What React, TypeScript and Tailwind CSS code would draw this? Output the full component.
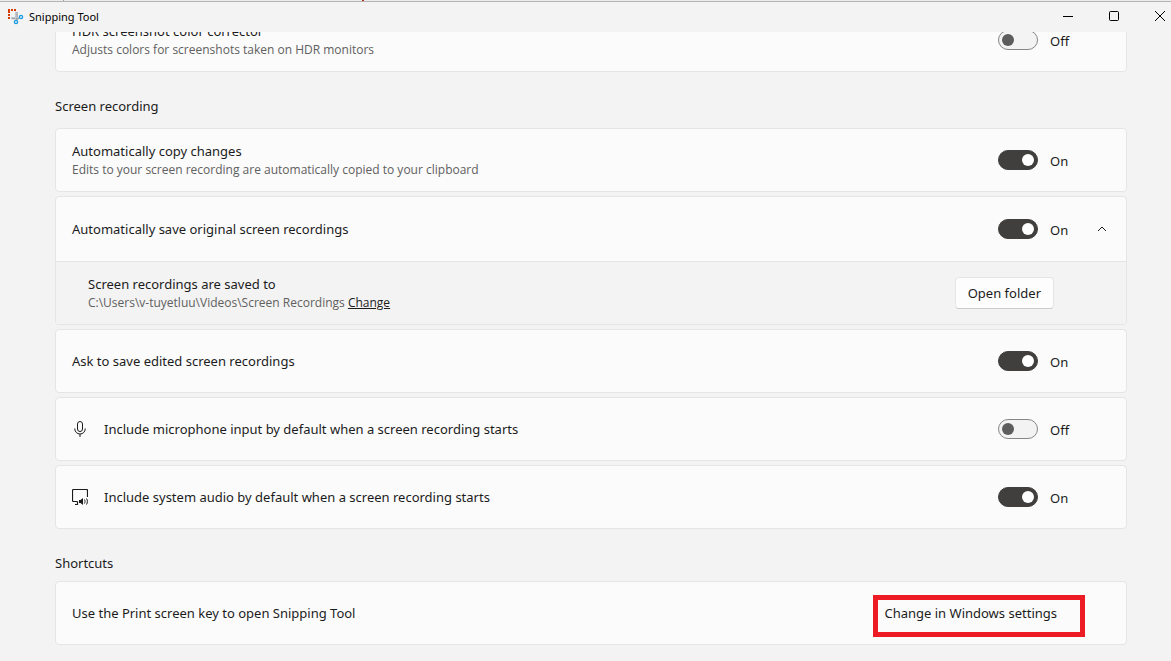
import { useState, type ReactNode } from "react";

function SnippingIcon() {
  return (
    <svg width="16" height="16" viewBox="0 0 16 16" fill="none" aria-hidden="true">
      <path d="M3.5 9.5H11M9 3v8" stroke="#9aa3aa" strokeWidth="1.5" />
      <path d="M7.5 2.5V9c0 1.5 .3 2 .5 2.500M3 8.500h8.500" stroke="#c3c8cc" />
      <path d="M0 1h8M1 2v8" stroke="#d83b01" strokeWidth="2" strokeDasharray="2 1" />
      <circle cx="13" cy="8" r="1.600" stroke="#1b9de2" strokeWidth="1.400" />
      <circle cx="8" cy="13" r="1.600" stroke="#1b9de2" strokeWidth="1.400" />
    </svg>
  );
}

function MicIcon() {
  return (
    <svg width="16" height="16" viewBox="0 0 16 16" fill="none" stroke="#1b1b1b" aria-hidden="true">
      <rect x="5.500" y=".5" width="5" height="10" rx="2.500" />
      <path d="M2.800 7.500v.5a5.200 5 0 0 0 10.400 0v-.5M8 13v3" />
    </svg>
  );
}

function SystemAudioIcon() {
  return (
    <svg width="16" height="16" viewBox="0 0 16 16" fill="none" stroke="#1b1b1b" aria-hidden="true">
      <path d="M5.500 12.500h-4a1 1 0 0 1-1-1v-10a1 1 0 0 1 1-1h13a1 1 0 0 1 1 1V8M5.500 12.500v3M3 15.500h3" strokeWidth="1.200" />
      <path d="M7 11h1.500L11 9v7l-2.500-2H7z" fill="#1b1b1b" stroke="none" />
      <path d="M12.500 10.500c.7 1.200 .7 2.800 0 4M14.500 9.500c1.200 1.800 1.200 4.200 0 6" />
    </svg>
  );
}

function Switch({ id, defaultOn = false }: { id: string; defaultOn?: boolean }) {
  const [on, setOn] = useState(defaultOn);

  return (
    <div className="flex items-center gap-3">
      <input
        id={id}
        type="checkbox"
        role="switch"
        checked={on}
        onChange={(e) => setOn(e.target.checked)}
        className="flex h-5 w-10 shrink-0 appearance-none items-center rounded-full border border-[#868686] bg-[#f3f3f3] px-[3px] before:size-3 before:rounded-full before:bg-[#5d5d5d] checked:justify-end checked:border-[#403f3d] checked:bg-[#403f3d] checked:before:bg-white"
      />
      <label htmlFor={id} className="w-10 pt-0.5">
        {on ? "On" : "Off"}
      </label>
    </div>
  );
}

function Description({ children }: { children: ReactNode }) {
  return <p className="font-['Open_Sans','Noto_Sans',sans-serif] text-xs leading-[18px] text-[#606060]">{children}</p>;
}

type RowProps = {
  id: string;
  title: string;
  description?: string;
  icon?: ReactNode;
  defaultOn?: boolean;
  action?: ReactNode;
};

function SettingRow({ id, title, description, icon, defaultOn, action }: RowProps) {
  return (
    <div className="flex h-[62px] items-center pr-3 pl-4">
      {icon && <span className="mr-4 shrink-0">{icon}</span>}
      <div className="min-w-0 flex-1">
        <label htmlFor={id} className="block">
          {title}
        </label>
        {description && <Description>{description}</Description>}
      </div>
      <Switch id={id} defaultOn={defaultOn} />
      <div className="flex w-6 justify-center">{action}</div>
    </div>
  );
}

function Card({ children }: { children: ReactNode }) {
  return <div className="overflow-hidden rounded border border-[#e5e5e5] bg-[#fbfbfb]">{children}</div>;
}

export default function App() {
  const [expanded, setExpanded] = useState(true);

  return (
    <div className="flex h-screen flex-col overflow-hidden bg-[#f3f3f3] font-['Noto_Sans','Open_Sans',sans-serif] text-[13px] leading-5 text-[#1b1b1b]">
      {/* edge of the window behind */}
      <div className="flex h-0.5 shrink-0 border-b border-[#b4b4b4] bg-[#ececec]">
        <span className="ml-[63px] w-px bg-[#a0a0a0]" />
        <span className="ml-[298px] w-0.5 bg-[#b03020]" />
      </div>
      <header className="flex h-[30px] shrink-0 items-center pl-2">
        <SnippingIcon />
        <h1 className="ml-[5px] flex-1 text-[11px] text-black">Snipping Tool</h1>
        <div className="-mr-3 flex self-start">
          <button aria-label="Minimize" className="flex h-7 w-[46px] items-center justify-center">
            <svg width="10" height="10" viewBox="0 0 10 10" stroke="#000">
              <path d="M0 5.500h10" />
            </svg>
          </button>
          <button aria-label="Maximize" className="flex h-7 w-[46px] items-center justify-center">
            <svg width="10" height="10" viewBox="0 0 10 10" fill="none" stroke="#000">
              <rect x=".5" y=".5" width="9" height="9" rx="1" />
            </svg>
          </button>
          <button aria-label="Close" className="flex h-7 w-[46px] items-center justify-center">
            <svg width="10" height="10" viewBox="0 0 10 10" stroke="#000">
              <path d="M0 0l10 10M10 0L0 10" />
            </svg>
          </button>
        </div>
      </header>

      <main className="min-h-0 flex-1 overflow-hidden pr-11 pl-[55px]">
        {/* scrolled so that the first card sits partly under the title bar */}
        <div className="-mt-6">
          <Card>
            <SettingRow
              id="hdr"
              title="HDR screenshot color corrector"
              description="Adjusts colors for screenshots taken on HDR monitors"
            />
          </Card>

          <h2 className="mt-6 mb-3">Screen recording</h2>
          <div className="flex flex-col gap-1">
            <Card>
              <SettingRow
                id="copy"
                title="Automatically copy changes"
                description="Edits to your screen recording are automatically copied to your clipboard"
                defaultOn
              />
            </Card>

            <Card>
              <div className="py-px">
                <SettingRow
                  id="save"
                  title="Automatically save original screen recordings"
                  defaultOn
                  action={
                    <button aria-label="Toggle details" aria-expanded={expanded} onClick={() => setExpanded(!expanded)}>
                      <svg width="10" height="10" viewBox="0 0 10 10" fill="none" stroke="#1b1b1b">
                        <path d="M1 7l4-4 4 4" />
                      </svg>
                    </button>
                  }
                />
              </div>
              {expanded && (
                <div className="flex h-[63px] items-center border-t border-[#e5e5e5] bg-[#f3f3f3] pr-[72px] pl-8">
                  <div className="flex-1">
                    <p>Screen recordings are saved to</p>
                    <Description>
                      C:\Users\v-tuyetluu\Videos\Screen Recordings{" "}
                      <a href="#change" className="text-[#1b1b1b] underline">
                        Change
                      </a>
                    </Description>
                  </div>
                  <button className="h-8 rounded border border-[#e5e5e5] border-b-[#cccccc] bg-[#fdfdfd] px-3">
                    Open folder
                  </button>
                </div>
              )}
            </Card>

            <Card>
              <SettingRow id="ask" title="Ask to save edited screen recordings" defaultOn />
            </Card>

            <Card>
              <SettingRow
                id="mic"
                icon={<MicIcon />}
                title="Include microphone input by default when a screen recording starts"
              />
            </Card>

            <Card>
              <SettingRow
                id="audio"
                icon={<SystemAudioIcon />}
                title="Include system audio by default when a screen recording starts"
                defaultOn
              />
            </Card>
          </div>

          <h2 className="mt-6 mb-2">Shortcuts</h2>
          <Card>
            <div className="flex h-[62px] items-center justify-between pr-[69px] pl-4">
              <p>Use the Print screen key to open Snipping Tool</p>
              <a href="#windows-settings" className="relative">
                Change in Windows settings
                <span className="absolute -top-2 -right-7 -bottom-3.5 -left-[11px] border-5 border-[#ed1c24]" />
              </a>
            </div>
          </Card>
        </div>
      </main>
    </div>
  );
}
